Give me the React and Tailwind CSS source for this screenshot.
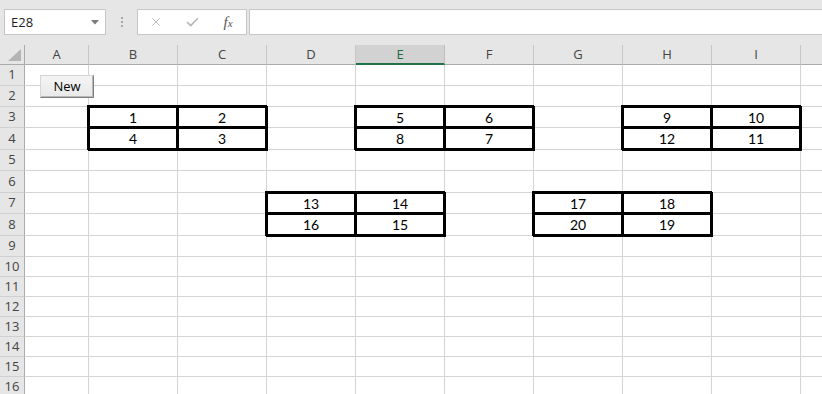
import { X, Check } from "lucide-react";

const COLS = [
  { id: "A", w: "w-[64px]" },
  { id: "B", w: "w-[89px]" },
  { id: "C", w: "w-[89px]" },
  { id: "D", w: "w-[89px]" },
  { id: "E", w: "w-[89px]" },
  { id: "F", w: "w-[89px]" },
  { id: "G", w: "w-[89px]" },
  { id: "H", w: "w-[89px]" },
  { id: "I", w: "w-[89px]" },
  { id: "J", w: "w-[89px]" },
];

// row heights include the gridline at the bottom
const ROWS = [21, 21, 21, 22, 21, 22, 21, 22, 21, 20, 20, 20, 20, 20, 20, 20];
const HEIGHT = { 20: "h-[20px]", 21: "h-[21px]", 22: "h-[22px]" };

// the five bordered blocks
const VALUES = {
  B3: "1", C3: "2", B4: "4", C4: "3",
  E3: "5", F3: "6", E4: "8", F4: "7",
  H3: "9", I3: "10", H4: "12", I4: "11",
  D7: "13", E7: "14", D8: "16", E8: "15",
  G7: "17", H7: "18", G8: "20", H8: "19",
};

// thick 3px border centred on the gridline
const thick =
  "relative z-[1] border-black shadow-[-1px_-1px_0_1px_#000,0_0_0_1px_#000,inset_0_0_0_1px_#000]";

const ui = "font-['Open_Sans',sans-serif]";
const cellFont = "font-['Lato',sans-serif]";

function FormulaBar() {
  return (
    <div className={`h-[45px] bg-[#e6e6e6] flex items-start pt-[9px] overflow-hidden ${ui}`}>
      {/* name box */}
      <div className="ml-[4px] w-[102px] h-[26px] shrink-0 bg-white border border-[#c6c6c6] flex items-center pl-[6px] pr-[6px]">
        <span className="flex-1 text-[13px] text-[#222] leading-none">E28</span>
        <svg width="8" height="5" viewBox="0 0 8 5">
          <path d="M0 0H8L4 4.5Z" fill="#7a7a7a" />
        </svg>
      </div>

      {/* grip dots */}
      <div className="w-[31px] h-[26px] shrink-0 flex flex-col items-center justify-center gap-[2px]">
        <span className="w-[2px] h-[2px] bg-[#a8a8a8]" />
        <span className="w-[2px] h-[2px] bg-[#a8a8a8]" />
        <span className="w-[2px] h-[2px] bg-[#a8a8a8]" />
      </div>

      {/* cancel / enter / function */}
      <div className="w-[110px] h-[26px] shrink-0 bg-white border border-[#c6c6c6] flex items-center">
        <div className="flex-1 flex justify-center">
          <X size={14} strokeWidth={1.5} color="#b4b4b4" />
        </div>
        <div className="flex-1 flex justify-center">
          <Check size={15} strokeWidth={2.5} color="#b4b4b4" />
        </div>
        <div className="flex-1 flex justify-center">
          <span className="font-['Liberation_Serif',serif] italic text-[15px] text-[#555] leading-none">
            f<span className="text-[11px]">x</span>
          </span>
        </div>
      </div>

      {/* formula input */}
      <div className="ml-[2px] w-[620px] h-[26px] shrink-0 bg-white border border-[#c6c6c6]" />
    </div>
  );
}

function HeaderRow() {
  return (
    <div className={`flex h-[20px] bg-[#e6e6e6] ${ui}`}>
      <div className="w-[25px] h-[20px] shrink-0 border-r border-b border-[#ababab] flex items-end justify-end pr-[3px] pb-[3px]">
        <svg width="13" height="12" viewBox="0 0 13 12">
          <path d="M13 0V12H0Z" fill="#b4b4b4" />
        </svg>
      </div>
      {COLS.map((c) => {
        const sel = c.id === "E";
        return (
          <div
            key={c.id}
            className={`${c.w} h-[20px] shrink-0 flex border-r ${
              sel
                ? "bg-[#d2d2d2] border-b-2 border-b-[#217346] border-r-[#bdbdbd] text-[#1e6b40]"
                : "border-b border-b-[#ababab] border-r-[#c6c6c6] text-[#444]"
            }`}
          >
            {/* J only peeks in at the right edge, its letter is off screen */}
            <span className="flex-1 text-center text-[13px] leading-[19px]">{c.id === "J" ? "" : c.id}</span>
          </div>
        );
      })}
    </div>
  );
}

function Row({ n, h }) {
  return (
    <div className={`flex ${HEIGHT[h]}`}>
      <div
        className={`w-[25px] shrink-0 bg-[#e6e6e6] border-r border-r-[#ababab] border-b border-b-[#d0d0d0] flex items-center justify-center text-[13px] text-[#444] ${ui}`}
      >
        {n}
      </div>
      {COLS.map((c) => {
        const key = c.id + n;
        const v = VALUES[key];
        return (
          <div
            key={key}
            className={`${c.w} shrink-0 bg-white border-r border-b flex items-center justify-center text-[14px] text-black ${cellFont} ${
              v ? thick : "border-[#d4d4d4]"
            }`}
          >
            {v}
          </div>
        );
      })}
    </div>
  );
}

export default function App() {
  return (
    <div className="w-[822px] h-[394px] overflow-hidden bg-white">
      <FormulaBar />
      <div className="relative">
        <HeaderRow />
        {ROWS.map((h, i) => (
          <Row key={i} n={i + 1} h={h} />
        ))}

        {/* form button floating over the sheet */}
        <button
          className={`absolute left-[40px] top-[30px] z-[2] w-[54px] h-[23px] bg-gradient-to-b from-[#f4f4f4] to-[#e9e9e9] border border-[#d6d6d6] border-r-[#7e7e7e] border-b-[#7e7e7e] shadow-[inset_-1px_-1px_0_#b9b9b9] text-[13px] text-black flex items-center justify-center ${ui}`}
        >
          New
        </button>
      </div>
    </div>
  );
}
